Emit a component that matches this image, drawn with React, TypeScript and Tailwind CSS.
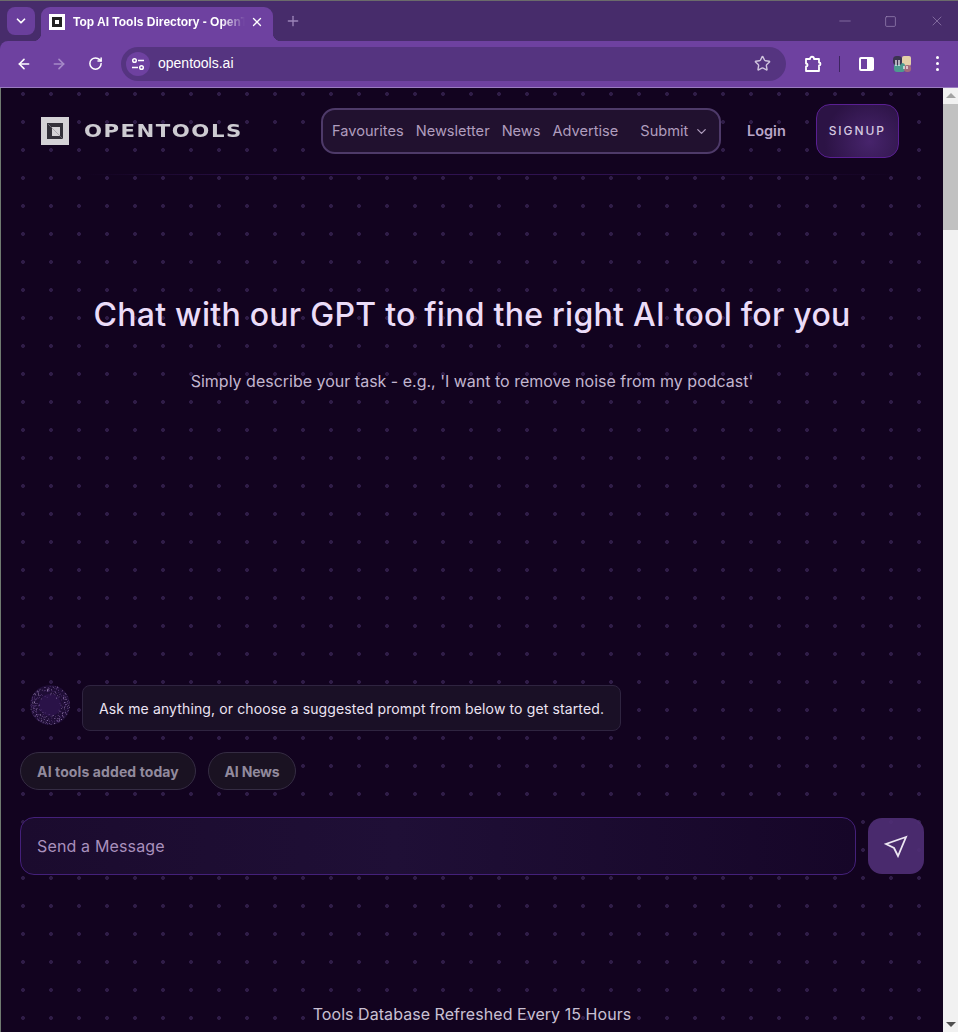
import { ArrowLeft, ArrowRight, ChevronDown, Minus, Plus, RotateCw, Square, Star, X } from "lucide-react";

const SANS = "font-['Inter','Liberation_Sans',sans-serif]";

function AvatarDots() {
  // scattered specks, denser near the edge
  const dots = [];
  const rand = (n: number) => {
    const v = Math.sin(n * 12.9898) * 43758.5453;
    return v - Math.floor(v);
  };
  for (let i = 0; i < 300; i++) {
    const a = rand(i + 1) * Math.PI * 2;
    const r = 8 + Math.sqrt(rand(i + 500)) * 11.5;
    dots.push(
      <circle
        key={i}
        cx={20 + r * Math.cos(a)}
        cy={20 + r * Math.sin(a)}
        r={0.4}
        fill={i % 3 === 0 ? "#cdb8e0" : "#7a569f"}
      />
    );
  }
  return (
    <svg width="40" height="40" viewBox="0 0 40 40" className="shrink-0">
      <circle cx="20" cy="20" r="20" fill="#1f0d36" />
      <circle cx="20" cy="20" r="11" fill="#2a1248" />
      {dots}
    </svg>
  );
}

function TabBar() {
  return (
    <div className="flex h-[40px] items-end bg-[#472c6b] pl-[7px]">
      <div className="mb-[6px] flex h-[28px] w-[28px] items-center justify-center rounded-[8px] bg-[#6a3f9c]">
        <ChevronDown size={14} strokeWidth={3} className="text-white" />
      </div>
      <div className="relative ml-[6px] flex h-[34px] w-[232px] items-center rounded-t-[9px] bg-[#6e41a0] pb-[4px] pl-[8px]">
        <span className="absolute bottom-0 -left-[8px] h-[8px] w-[8px] bg-[radial-gradient(circle_at_0_0,#472c6b_8px,#6e41a0_8.5px)]" />
        <span className="absolute bottom-0 -right-[8px] h-[8px] w-[8px] bg-[radial-gradient(circle_at_100%_0,#472c6b_8px,#6e41a0_8.5px)]" />
        <div className="flex h-[16px] w-[16px] items-center justify-center bg-white">
          <div className="flex h-[10px] w-[10px] items-center justify-center bg-[#222]">
            <div className="h-[4px] w-[4px] bg-white" />
          </div>
        </div>
        <span className="ml-[8px] w-[172px] overflow-hidden text-[12px] font-semibold whitespace-nowrap text-white [mask-image:linear-gradient(90deg,#000_86%,transparent)] font-['Liberation_Sans',sans-serif]">
          Top AI Tools Directory - OpenTools
        </span>
        <X size={14} strokeWidth={2.2} className="ml-[5px] text-white" />
      </div>
      <Plus size={16} strokeWidth={2} className="mb-[12px] ml-[12px] text-[#9c84b9]" />
      <div className="mb-[11px] ml-auto flex items-center text-[#9d88b7]">
        <Minus size={18} strokeWidth={0.9} className="mr-[30px]" />
        <Square size={13} strokeWidth={1.3} className="mr-[32px]" />
        <X size={16} strokeWidth={1} className="mr-[13px]" />
      </div>
    </div>
  );
}

function Toolbar() {
  return (
    <div className="flex h-[47px] items-center rounded-tl-[8px] border-b border-[#9a7cc0] bg-[#6e41a0] pb-[1px]">
      <ArrowLeft size={16} strokeWidth={2.4} className="ml-[16px] text-white" />
      <ArrowRight size={16} strokeWidth={2.4} className="ml-[19px] text-[#a68ac8]" />
      <RotateCw size={15} strokeWidth={2.4} className="ml-[21px] text-white" />
      <div className="ml-[18px] flex h-[34px] w-[665px] items-center rounded-full bg-[#553480] pl-[5px]">
        <div className="flex h-[24px] w-[24px] items-center justify-center rounded-full bg-[#6e41a0]">
          <svg width="14" height="14" viewBox="0 0 14 14" fill="none" stroke="white" strokeWidth="1.5">
            <circle cx="3.5" cy="3.5" r="1.8" />
            <path d="M7 3.5h6M1 10.5h6" />
            <circle cx="10.5" cy="10.5" r="1.8" />
          </svg>
        </div>
        <span className="ml-[8px] text-[14px] text-white font-['Liberation_Sans',sans-serif]">opentools.ai</span>
        <Star size={17} strokeWidth={2} className="mr-[15px] ml-auto text-[#cfc3dd]" />
      </div>
      <svg width="18" height="18" viewBox="0 0 18 18" fill="none" stroke="white" strokeWidth="1.8" className="ml-[18px]">
        <path d="M2 4h4c0-3 4-3 4 0h5v3.5c2 0 2 3 0 3V16H2v-4.5c2 0 2-3 0-3z" strokeLinejoin="round" />
      </svg>
      <div className="ml-[17px] h-[16px] w-[1px] bg-[#3d2560]" />
      <div className="ml-[19px] flex h-[14px] w-[15px] overflow-hidden rounded-[2px] border-2 border-white">
        <div className="w-1/2 bg-[#6e41a0]" />
        <div className="w-1/2 bg-white" />
      </div>
      <svg width="20" height="18" viewBox="0 0 20 18" className="ml-[18px]">
        <rect x="10" y="1" width="9" height="10" rx="2" fill="#e4cfa8" />
        <rect x="2" y="8" width="11" height="9" rx="3" fill="#4d9a8f" />
        <rect x="12" y="10" width="7" height="7" rx="3" fill="#a46a7a" />
        <rect x="1" y="1" width="9" height="9" rx="3.5" fill="#3b3350" />
        <path d="M4 5v6M7 5v6M12 11v3M15 11v3" stroke="white" strokeWidth="1.2" />
      </svg>
      <div className="ml-[24px] flex flex-col gap-[3px]">
        <span className="h-[3px] w-[3px] rounded-full bg-white" />
        <span className="h-[3px] w-[3px] rounded-full bg-white" />
        <span className="h-[3px] w-[3px] rounded-full bg-white" />
      </div>
    </div>
  );
}

function Header() {
  return (
    <header className="flex h-[87px] flex-col">
      <div className="ml-[40px] flex flex-1 items-start pt-[16px]">
        <svg width="28" height="28" viewBox="0 0 28 28" className="mt-[13px] shrink-0">
          <rect width="28" height="28" fill="#d4d2d6" />
          <rect x="6" y="6" width="16" height="16" fill="#33313a" />
          <rect x="11" y="10" width="8" height="9" fill="#d4d2d6" />
          <path d="M7 7l15 15" stroke="#8d8b93" strokeWidth="0.6" />
        </svg>
        <span className="mt-[17px] ml-[15px] w-[168px] origin-left scale-x-[1.18] text-[18px] leading-[20px] font-bold tracking-[0.07em] text-[#cdcbd1] font-['DejaVu_Sans',sans-serif]">
          OPENTOOLS
        </span>
        <nav className={`mt-[4px] ml-[69px] flex h-[46px] w-[400px] items-center rounded-[14px] border-2 border-[#4e3a69] bg-[#21112f] pt-[1px] pl-[9px] text-[14.6px] text-[#b09dbe] ${SANS}`}>
          <span>Favourites</span>
          <span className="ml-[12px]">Newsletter</span>
          <span className="ml-[12px]">News</span>
          <span className="ml-[12px]">Advertise</span>
          <span className="ml-[22px]">Submit</span>
          <ChevronDown size={15} strokeWidth={2} className="ml-[6px]" />
        </nav>
        <span className={`mt-[15px] ml-[26px] text-[14.5px] leading-[24px] font-semibold text-[#b9a6c8] ${SANS}`}>Login</span>
        <button className={`ml-[30px] flex h-[54px] w-[83px] items-center justify-center rounded-[14px] border border-[#5a1f93] bg-[radial-gradient(circle_at_65%_70%,#47246c,#2c1345_70%)] text-[12px] font-medium tracking-[0.16em] text-[#d5c8e0] ${SANS}`}>
          SIGNUP
        </button>
      </div>
      <div className="mx-[40px] h-[1px] bg-[linear-gradient(90deg,transparent_5%,#2f1250_30%,#2f1250_65%,transparent)]" />
    </header>
  );
}

function Chat() {
  return (
    <div className={`flex flex-1 flex-col ${SANS}`}>
      <h1 className="mt-[118px] text-center text-[32px] leading-[44px] font-medium tracking-[0.26px] text-[#ebdcf8]">
        Chat with our GPT to find the right AI tool for you
      </h1>
      <p className="mt-[32px] text-center text-[16px] leading-[24px] text-[#c2b6cf]">
        Simply describe your task - e.g., 'I want to remove noise from my podcast'
      </p>
      <div className="mt-[292px] flex items-start pl-[29px]">
        <AvatarDots />
        <div className="ml-[12px] flex h-[46px] w-[539px] items-center rounded-[8px] border border-[#2f2440] bg-[#1a1026] pl-[16px] text-[14px] tracking-[0.125px] text-[#ece4f3]">
          Ask me anything, or choose a suggested prompt from below to get started.
        </div>
      </div>
      <div className="mt-[21px] flex gap-[12px] pl-[19px]">
        <span className="flex h-[38px] w-[176px] items-center justify-center rounded-full border border-[#352c43] bg-[#1a1222] text-[14px] font-bold tracking-[0.1px] text-[#928a9d]">
          AI tools added today
        </span>
        <span className="flex h-[38px] w-[88px] items-center justify-center rounded-full border border-[#352c43] bg-[#1a1222] text-[14px] font-bold tracking-[-0.2px] text-[#928a9d]">
          AI News
        </span>
      </div>
      <div className="mt-[27px] flex items-center gap-[12px] px-[19px]">
        <div className="flex h-[58px] flex-1 items-center rounded-[14px] border border-[#44207a] bg-[linear-gradient(90deg,#1b0b2e,#1f0f36_45%,#160628)] pl-[16px] text-[16px] tracking-[0.15px] text-[#a990bd]">
          Send a Message
        </div>
        <button className="flex h-[56px] w-[56px] items-center justify-center rounded-[14px] bg-[#502f75]/90">
          <svg width="24" height="24" viewBox="0 0 24 24" fill="none" stroke="#ece6f2" strokeWidth="1.8">
            <path d="M22 3 2 10l8 4 4 8z" />
          </svg>
        </button>
      </div>
      <p className="mt-auto mb-[7px] text-center text-[16px] leading-[22px] tracking-[0.05px] text-[#c9c0d3]">
        Tools Database Refreshed Every 15 Hours
      </p>
    </div>
  );
}

export default function App() {
  return (
    <div className="flex h-[1032px] w-[958px] flex-col overflow-hidden border-t border-[#6b6b6b] bg-[#472c6b]">
      <TabBar />
      <Toolbar />
      <div className="flex flex-1 overflow-hidden">
        <main className="flex w-[943px] flex-col border-l border-[#6f7a70] bg-[#12031f] bg-[radial-gradient(circle,#2f1c47_1.7px,transparent_2.2px)] bg-[length:28px_28px] bg-[position:8px_-8px]">
          <Header />
          <Chat />
        </main>
        <aside className="flex w-[15px] flex-col items-center bg-[#f1f1f1]">
          <span className="mt-[5px] h-0 w-0 border-x-[5px] border-b-[5px] border-x-transparent border-b-[#a3a3a3]" />
          <div className="mt-[6px] h-[126px] w-full bg-[#c1c1c1]" />
          <span className="mt-auto mb-[5px] h-0 w-0 border-x-[5px] border-t-[5px] border-x-transparent border-t-[#505050]" />
        </aside>
      </div>
    </div>
  );
}
